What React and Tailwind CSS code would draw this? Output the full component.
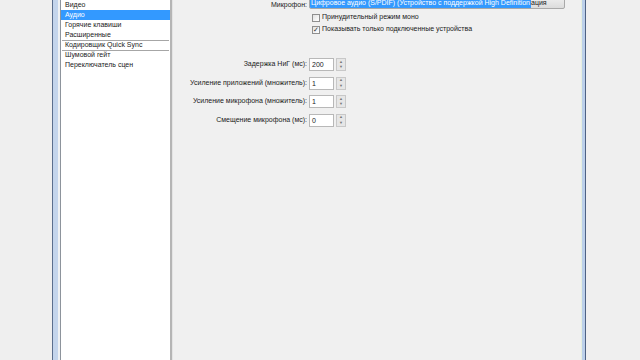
import { useState } from "react";

const items = [
  { label: "Видео" },
  { label: "Аудио", active: true },
  { label: "Горячие клавиши" },
  { label: "Расширенные", sep: true },
  { label: "Кодировщик Quick Sync", sep: true },
  { label: "Шумовой гейт" },
  { label: "Переключатель сцен" },
];

const fields = [
  { label: "Задержка НиГ (мс):", value: "200" },
  { label: "Усиление приложений (множитель):", value: "1" },
  { label: "Усиление микрофона (множитель):", value: "1" },
  { label: "Смещение микрофона (мс):", value: "0" },
];

function Spinner() {
  return (
    <div className="flex flex-col w-[10px] h-[13px] ml-[2px] border border-[#c8c8c8] bg-[#e6e6e6]">
      <div className="flex-1 flex items-center justify-center text-[4px] leading-none text-[#777]">▲</div>
      <div className="flex-1 flex items-center justify-center text-[4px] leading-none text-[#777]">▼</div>
    </div>
  );
}

export default function App() {
  const [mono, setMono] = useState(false);
  const [onlyConnected, setOnlyConnected] = useState(true);

  return (
    <div
      className="w-[640px] h-[360px] overflow-hidden flex bg-[#efefef] text-[7px] text-[#1a1a1a]"
      style={{ fontFamily: "'Liberation Sans', Arial, sans-serif" }}
    >
      {/* desktop left */}
      <div className="w-[52px]" />

      {/* window frame left */}
      <div className="w-[1px] bg-[#5b6f8e]" />
      <div className="w-[5px] bg-[#c4d5ec]" />
      <div className="w-[2px] bg-[#eef1f4]" />

      {/* settings list */}
      <div className="w-[112px] bg-white border-l border-[#8d949c] border-r-2 border-r-[#b5b5b5] flex flex-col">
        {items.map((it) => (
          <div key={it.label}>
            <div
              className={
                "h-[10px] leading-[10px] pl-[4px] " +
                (it.active ? "bg-[#3399ff] text-white" : "")
              }
            >
              {it.label}
            </div>
            {it.sep && <div className="h-[1px] bg-[#a6a6a6] mx-[1px] -mb-[1px] relative" />}
          </div>
        ))}
      </div>

      {/* settings panel */}
      <div className="w-[409px] flex flex-col border-l border-[#e4e4e4] bg-[#f0f0f0]">
        {/* microphone */}
        <div className="flex items-end h-[9px]">
          <div className="w-[136px] text-right pr-[2px] leading-[8px]">Микрофон:</div>
          <div className="w-[256px] h-[14px] -mt-[5px] self-end border border-[#a9a9a9] rounded-b-[2px] bg-gradient-to-b from-[#f2f2f2] to-[#dcdcdc] flex items-end overflow-hidden">
            <span className="bg-[#3399ff] text-white h-[9px] leading-[8px] whitespace-nowrap px-[1px]">
              Цифровое аудио (S/PDIF) (Устройство с поддержкой High Definition
            </span>
            <span className="leading-[8px] h-[9px] whitespace-nowrap">ация</span>
          </div>
        </div>

        {/* checkboxes */}
        <div className="flex flex-col gap-[3px] mt-[4px] pl-[139px]">
          <label className="flex items-center gap-[2px] h-[9px]" onClick={() => setMono(!mono)}>
            <span className="w-[8px] h-[8px] border border-[#8f8f8f] bg-gradient-to-br from-[#e3e3e3] to-white flex items-center justify-center text-[7px] leading-none text-[#333]">
              {mono ? "✓" : ""}
            </span>
            <span>Принудительный режим моно</span>
          </label>
          <label className="flex items-center gap-[2px] h-[9px]" onClick={() => setOnlyConnected(!onlyConnected)}>
            <span className="w-[8px] h-[8px] border border-[#8f8f8f] bg-gradient-to-br from-[#e3e3e3] to-white flex items-center justify-center text-[7px] leading-none text-[#333]">
              {onlyConnected ? "✓" : ""}
            </span>
            <span>Показывать только подключенные устройства</span>
          </label>
        </div>

        {/* numeric fields */}
        <div className="flex flex-col gap-[5.5px] mt-[24px]">
          {fields.map((f) => (
            <div key={f.label} className="flex items-center h-[13px]">
              <div className="w-[136px] text-right pr-[2px] whitespace-nowrap">{f.label}</div>
              <div className="w-[25px] h-[13px] border border-[#b8b8b8] bg-white pl-[2px] leading-[11px]">
                {f.value}
              </div>
              <Spinner />
            </div>
          ))}
        </div>
      </div>

      {/* window frame right */}
      <div className="w-[1px] bg-[#e6f0e0]" />
      <div className="w-[3px] bg-[#bcd0ea]" />
      <div className="w-[1px] bg-[#4e6283]" />

      {/* desktop right */}
      <div className="flex-1" />
    </div>
  );
}
